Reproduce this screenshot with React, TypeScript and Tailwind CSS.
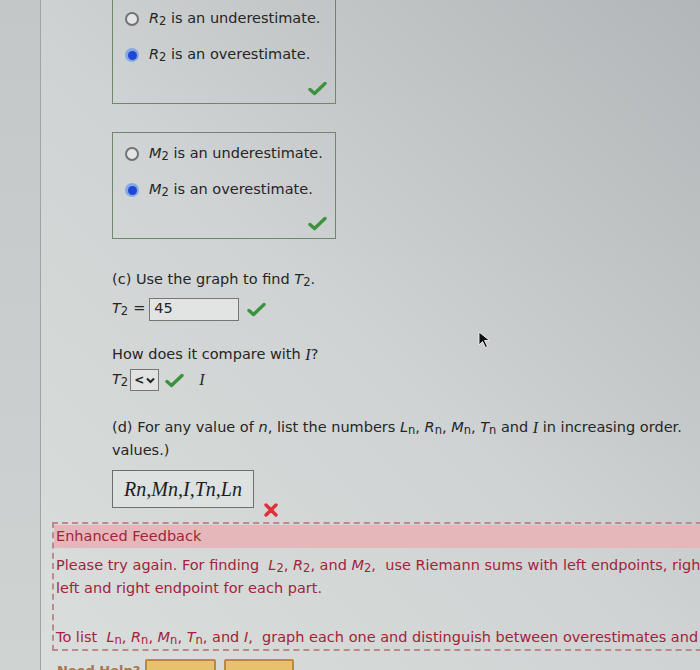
import React from "react";

const font = { fontFamily: '"DejaVu Sans", Verdana, sans-serif' };

function Check({ className = "" }: { className?: string }) {
  return (
    <svg width="19" height="15" viewBox="0 0 19 15" className={className}>
      <path d="M2 8.5 L6.5 12.5 L17 2.5" fill="none" stroke="#3c933f" strokeWidth="3.4" strokeLinecap="round" strokeLinejoin="round" />
    </svg>
  );
}

function XMark() {
  return (
    <svg width="14" height="14" viewBox="0 0 14 14">
      <path d="M2 2 L12 12 M12 2 L2 12" stroke="#e0303c" strokeWidth="3.4" strokeLinecap="round" />
    </svg>
  );
}

function Radio({ on }: { on?: boolean }) {
  return on ? (
    <span className="w-[14px] h-[14px] rounded-full bg-[#86a9e6] flex items-center justify-center">
      <span className="w-[9px] h-[9px] rounded-full bg-[#1f47d6]" />
    </span>
  ) : (
    <span className="w-[14px] h-[14px] rounded-full border-2 border-[#727272] bg-[#e4e6e6]" />
  );
}

function V({ l, s }: { l: string; s: string }) {
  return (
    <span className="italic">
      {l}
      <sub className="not-italic text-[11.5px] relative top-[2px]">{s}</sub>
    </span>
  );
}

function Opt({ on, l, t }: { on?: boolean; l: string; t: string }) {
  return (
    <div className="flex items-center h-[36px]">
      <div className="w-[36px] flex justify-center pl-[2px]">
        <Radio on={on} />
      </div>
      <span>
        <V l={l} s="2" /> {t}
      </span>
    </div>
  );
}

function Box({ l, first }: { l: string; first?: boolean }) {
  return (
    <div
      className={`w-[224px] border border-[#71876d] ${first ? "mt-[-3px] h-[107px]" : "mt-[28px] h-[107px]"} flex flex-col relative`}
    >
      <div className="pt-[3px]">
        <Opt l={l} t="is an underestimate." />
        <Opt on l={l} t="is an overestimate." />
      </div>
      <div className="absolute right-[8px] bottom-[7px]">
        <Check />
      </div>
    </div>
  );
}

const serifI = { fontFamily: '"Liberation Serif", serif', fontSize: 16 };

export default function App() {
  return (
    <div
      style={font}
      className="w-[700px] h-[670px] overflow-hidden flex text-[14.5px] text-[#262626] bg-linear-to-bl from-[#b2b6b8] via-[#cfd3d3] to-[#dadedc]"
    >
      <div className="w-[41px] shrink-0 border-r border-[#9ea3a4] bg-linear-to-b from-[#c3c7c8] to-[#cfd3d2]" />
      <div className="flex-1 flex flex-col pl-[10px]">
        <div className="pl-[61px] flex flex-col">
          <Box l="R" first />
          <Box l="M" />

          <div className="mt-[32px] h-[18px] flex items-center">
            (c) Use the graph to find&nbsp;<V l="T" s="2" />.
          </div>
          <div className="mt-[8px] h-[24px] flex items-center">
            <V l="T" s="2" />
            <span className="ml-[5px] mr-[4px]">=</span>
            <span className="w-[90px] h-[23px] border border-[#777] bg-[#e1e4e3] pl-[4px] flex items-center">45</span>
            <Check className="ml-[8px]" />
          </div>

          <div className="mt-[25px] h-[18px] flex items-center">
            How does it compare with&nbsp;<span className="italic" style={serifI}>I</span>?
          </div>
          <div className="mt-[5px] h-[22px] flex items-center">
            <V l="T" s="2" />
            <span className="ml-[2px] w-[29px] h-[22px] border border-[#777] bg-[#e0e3e2] flex items-center justify-center gap-[2px] text-[12px] font-bold">
              <span>&lt;</span>
              <svg width="9" height="7" viewBox="0 0 9 7"><path d="M1 1.5 L4.5 5 L8 1.5" fill="none" stroke="#222" strokeWidth="2" /></svg>
            </span>
            <Check className="ml-[6px]" />
            <span className="ml-[15px] italic" style={serifI}>I</span>
          </div>

          <div className="mt-[28px] h-[18px] flex items-center whitespace-nowrap">
            (d) For any value of&nbsp;<span className="italic">n</span>, list the numbers&nbsp;
            <V l="L" s="n" />,&nbsp;<V l="R" s="n" />,&nbsp;<V l="M" s="n" />,&nbsp;<V l="T" s="n" />&nbsp;and&nbsp;
            <span className="italic" style={serifI}>I</span>&nbsp;in increasing order.
          </div>
          <div className="mt-[5px] h-[18px] flex items-center">values.)</div>
          <div className="mt-[10px] flex items-start">
            <span
              className="w-[142px] h-[38px] border border-[#6f6f6f] bg-[#dde1e0] flex items-center justify-center italic text-[20px] text-[#1d1d1d]"
              style={{ fontFamily: '"Liberation Serif", serif' }}
            >
              Rn,Mn,I,Tn,Ln
            </span>
            <span className="ml-[10px] mt-[33px]">
              <XMark />
            </span>
          </div>
        </div>

        <div className="mt-[5px] ml-[1px] w-[700px] border-2 border-dashed border-[#b98a90] border-r-0 text-[#a3243a] h-[131px] pt-[1px]">
          <div className="h-[23px] bg-[#e5b7bb] flex items-center pl-[2px]">Enhanced Feedback</div>
          <div className="pl-[2px] whitespace-nowrap">
            <div className="h-[23px] flex items-center mt-[6px]">
              Please try again. For finding&nbsp;&nbsp;<V l="L" s="2" />,&nbsp;<V l="R" s="2" />, and&nbsp;<V l="M" s="2" />,&nbsp;&nbsp;use Riemann sums with left endpoints, right endpoints, and midpoints.
            </div>
            <div className="h-[23px] flex items-center">left and right endpoint for each part.</div>
            <div className="h-[23px] flex items-center mt-[26px]">
              To list&nbsp;&nbsp;<V l="L" s="n" />,&nbsp;<V l="R" s="n" />,&nbsp;<V l="M" s="n" />,&nbsp;<V l="T" s="n" />, and&nbsp;
              <span className="italic">I</span>,&nbsp;&nbsp;graph each one and distinguish between overestimates and underestimates.
            </div>
          </div>
        </div>

        <div className="mt-[8px] flex items-start pl-[6px]">
          <span className="font-bold text-[13px] text-[#a8744a] w-[88px] whitespace-nowrap mt-[2px]">Need Help?</span>
          <span className="w-[71px] h-[20px] border-2 border-[#b88a3a] bg-[#e8c070] rounded-[2px]" />
          <span className="ml-[8px] w-[70px] h-[20px] border-2 border-[#b88a3a] bg-[#e8c070] rounded-[2px]" />
        </div>
      </div>

      <svg className="absolute left-[478px] top-[331px]" width="14" height="18" viewBox="0 0 14 18">
        <path d="M1 1 L1 14 L4.5 10.5 L7.5 16.5 L9.5 15.5 L6.5 9.5 L11.5 9.5 Z" fill="#111" stroke="#fff" strokeWidth="0.8" />
      </svg>
    </div>
  );
}
